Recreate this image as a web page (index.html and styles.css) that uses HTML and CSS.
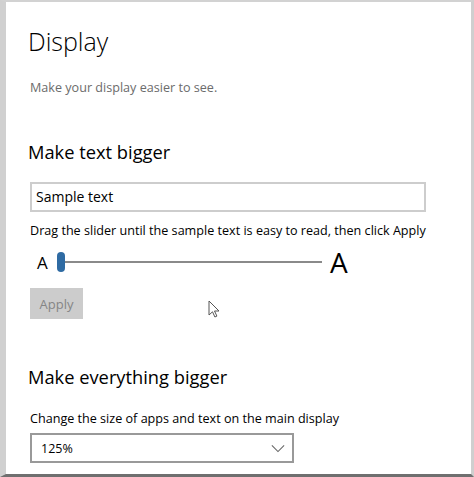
FILE: index.html
```html
<!DOCTYPE html>
<html lang="en">

<head>
    <meta charset="UTF-8">
    <meta name="viewport" content="width=device-width, initial-scale=1.0">
    <title>Display</title>
    <link rel="stylesheet" href="styles.css">
</head>

<body>
    <div class="janela">
        <div class="conteudo">
            <h1 class="titulo">Display</h1>
            <p class="subtitulo">Make your display easier to see.</p>

            <h2 class="secao">Make text bigger</h2>
            <div class="amostra">Sample text</div>
            <p class="dica">Drag the slider until the sample text is easy to read, then click Apply</p>
            <div class="slider">
                <span class="letra-pequena">A</span>
                <div class="trilho">
                    <div class="polegar"></div>
                    <div class="linha"></div>
                </div>
                <span class="letra-grande">A</span>
            </div>
            <div class="linha-botao">
                <button class="aplicar" disabled>Apply</button>
                <svg class="cursor" viewBox="0 0 12 18" width="12" height="18">
                    <path d="M1 1v14l3.5-3.2 2.4 5.2 2-.9-2.4-5.1H11z" fill="#fff" stroke="#555" stroke-width="1" />
                </svg>
            </div>

            <h2 class="secao secao-tudo">Make everything bigger</h2>
            <p class="dica dica-tudo">Change the size of apps and text on the main display</p>
            <div class="seletor">
                <span>125%</span>
                <svg viewBox="0 0 16 10" width="14" height="9">
                    <path d="M1 1.5l7 7 7-7" fill="none" stroke="#666" stroke-width="1.2" />
                </svg>
            </div>
        </div>
    </div>
</body>

</html>
```

FILE: styles.css
```css
* {
    box-sizing: border-box;
}

body {
    margin: 0;
    font-family: 'Open Sans', 'Noto Sans', sans-serif;
    color: #000;
    background: #fff;
}

.janela {
    width: 474px;
    height: 477px;
    border-top: 2px solid #d2d2d2;
    border-left: 6px solid #d0d0d0;
    border-right: 3px solid #cfcfcf;
    border-bottom: 3px solid #6f6f6f;
    overflow: hidden;
}

.conteudo {
    padding: 0 0 0 22px;
    display: flex;
    flex-direction: column;
    align-items: flex-start;
}

.titulo {
    margin: 22px 0 0;
    font-size: 25px;
    font-weight: 300;
    line-height: 34px;
}

.subtitulo {
    margin: 21px 0 0 2px;
    font-size: 12.6px;
    color: #6b6b6b;
    line-height: 18px;
}

.secao {
    margin: 42px 0 0;
    font-size: 18.3px;
    font-weight: 400;
    line-height: 26px;
}

.amostra {
    margin: 17px 0 0 2px;
    width: 396px;
    height: 30px;
    border: 2px solid #cdcdcd;
    padding: 0 4px;
    font-size: 14px;
    line-height: 26px;
}

.dica {
    margin: 10px 0 0 2px;
    font-size: 12.6px;
    line-height: 18px;
}

.slider {
    margin: 7px 0 0 9px;
    display: flex;
    align-items: center;
    height: 30px;
}

.letra-pequena {
    font-size: 17px;
    width: 20px;
}

.trilho {
    display: flex;
    align-items: center;
    width: 265px;
}

.polegar {
    width: 8px;
    height: 20px;
    border-radius: 4px;
    background: #2f6ba3;
}

.linha {
    flex: 1;
    height: 2px;
    background: #8a8a8a;
}

.letra-grande {
    margin-left: 8px;
    font-size: 28px;
    line-height: 30px;
}

.linha-botao {
    margin: 11px 0 0 2px;
    display: flex;
    align-items: flex-start;
    gap: 125px;
}

.aplicar {
    width: 53px;
    height: 31px;
    border: none;
    background: #cccccc;
    color: #858585;
    font-family: inherit;
    font-size: 13px;
    padding: 0;
}

.cursor {
    margin-top: 12px;
}

.secao-tudo {
    margin-top: 45px;
}

.dica-tudo {
    margin-top: 20px;
}

.seletor {
    margin: 5px 0 0 2px;
    width: 264px;
    height: 30px;
    border: 2px solid #999;
    padding: 0 7px 0 9px;
    display: flex;
    align-items: center;
    justify-content: space-between;
    font-size: 12.5px;
}
```
